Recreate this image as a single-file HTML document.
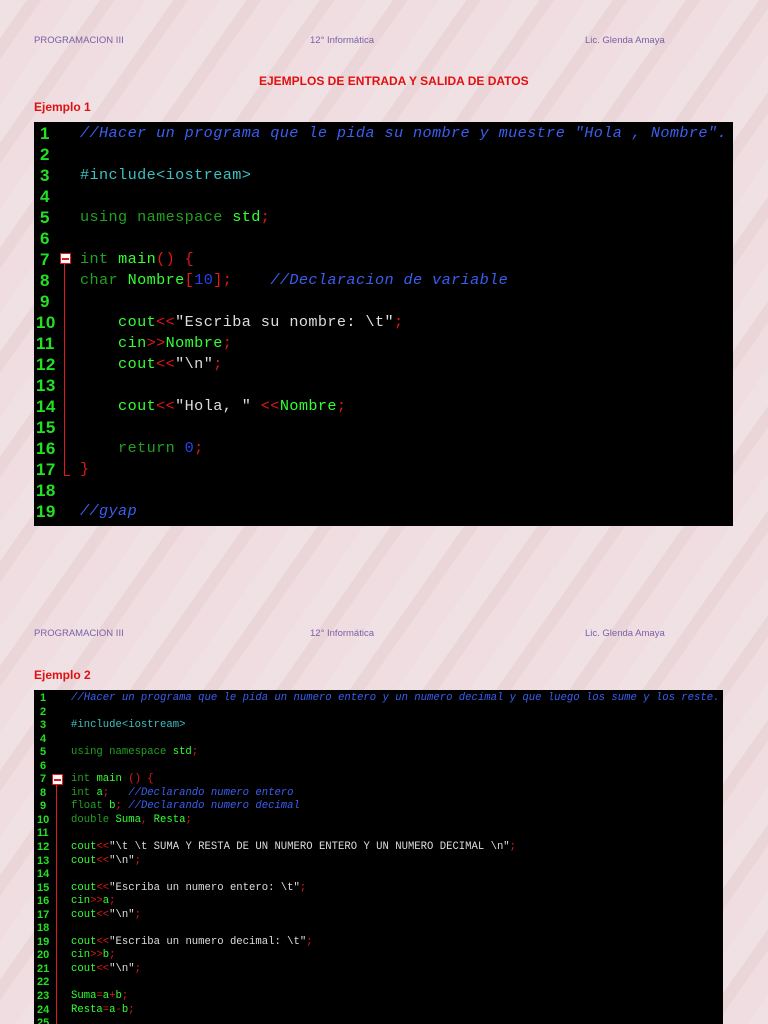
<!DOCTYPE html>
<html><head><meta charset="utf-8"><style>
*{margin:0;padding:0}
html,body{width:768px;height:1024px;overflow:hidden}
body{position:relative;font-family:"Liberation Sans",sans-serif;
background:#ecdade;
background-image:repeating-linear-gradient(125deg,rgba(255,255,255,0.18) 0 22px,rgba(205,160,160,0.08) 22px 34px,rgba(255,240,240,0.15) 34px 60px);}
.h{position:absolute;font-size:9.5px;color:#7a5fa8;}
.t{position:absolute;color:#e01010;font-weight:bold;font-size:12px;}
.code{position:absolute;background:#000;font-family:"Liberation Mono",monospace;overflow:hidden}
.ln{position:relative;white-space:pre}
.n{position:absolute;left:0;color:#22e022;font-weight:bold;font-family:"Liberation Sans",sans-serif}
.c{color:#3a5ff0;font-style:italic}.i{color:#3cc0c0}.k{color:#22a022}.g{color:#33ff33}.r{color:#e01818}.s{color:#ddd}.b{color:#2244ee}
.fold{position:absolute;border:1px solid #e01818;background:#fff}
.fold:after{content:"";position:absolute;left:1px;right:1px;top:50%;height:2px;margin-top:-1px;background:#e01818}
.vl{position:absolute;background:#e01818;width:1px}
</style></head><body>
<div class="h" style="left:34px;top:35px">PROGRAMACION III</div>
<div class="h" style="left:310px;top:35px">12° Informática</div>
<div class="h" style="left:585px;top:35px">Lic. Glenda Amaya</div>
<div class="t" style="left:259px;top:74px">EJEMPLOS DE ENTRADA Y SALIDA DE DATOS</div>
<div class="t" style="left:34px;top:100px">Ejemplo 1</div>

<div class="code" style="left:34px;top:122px;width:699px;height:404px;font-size:15.2px;line-height:21px;padding-top:1px;box-sizing:border-box;letter-spacing:0.4px"><div class="fold" style="left:26px;top:131px;width:9px;height:9px"></div><div class="vl" style="left:30px;top:142px;height:212px"></div><div class="vl" style="left:30px;top:353px;height:1px;width:6px"></div>
<div class="ln"><span class="n" style="left:6px;font-size:17px">1</span><span style="margin-left:46px" class="c">//Hacer un programa que le pida su nombre y muestre "Hola , Nombre".</span></div>
<div class="ln"><span class="n" style="left:6px;font-size:17px">2</span> </div>
<div class="ln"><span class="n" style="left:6px;font-size:17px">3</span><span style="margin-left:46px" class="i">#include&lt;iostream&gt;</span></div>
<div class="ln"><span class="n" style="left:6px;font-size:17px">4</span> </div>
<div class="ln"><span class="n" style="left:6px;font-size:17px">5</span><span style="margin-left:46px" class="k">using namespace </span><span class="g">std</span><span class="r">;</span></div>
<div class="ln"><span class="n" style="left:6px;font-size:17px">6</span> </div>
<div class="ln"><span class="n" style="left:6px;font-size:17px">7</span><span style="margin-left:46px" class="k">int </span><span class="g">main</span><span class="r">() {</span></div>
<div class="ln"><span class="n" style="left:6px;font-size:17px">8</span><span style="margin-left:46px" class="k">char </span><span class="g">Nombre</span><span class="r">[</span><span class="b">10</span><span class="r">];</span>    <span class="c">//Declaracion de variable</span></div>
<div class="ln"><span class="n" style="left:6px;font-size:17px">9</span> </div>
<div class="ln"><span class="n" style="left:2px;font-size:17px">10</span><span style="margin-left:46px" class="g">    cout</span><span class="r">&lt;&lt;</span><span class="s">"Escriba su nombre: \t"</span><span class="r">;</span></div>
<div class="ln"><span class="n" style="left:2px;font-size:17px">11</span><span style="margin-left:46px" class="g">    cin</span><span class="r">&gt;&gt;</span><span class="g">Nombre</span><span class="r">;</span></div>
<div class="ln"><span class="n" style="left:2px;font-size:17px">12</span><span style="margin-left:46px" class="g">    cout</span><span class="r">&lt;&lt;</span><span class="s">"\n"</span><span class="r">;</span></div>
<div class="ln"><span class="n" style="left:2px;font-size:17px">13</span> </div>
<div class="ln"><span class="n" style="left:2px;font-size:17px">14</span><span style="margin-left:46px" class="g">    cout</span><span class="r">&lt;&lt;</span><span class="s">"Hola, " </span><span class="r">&lt;&lt;</span><span class="g">Nombre</span><span class="r">;</span></div>
<div class="ln"><span class="n" style="left:2px;font-size:17px">15</span> </div>
<div class="ln"><span class="n" style="left:2px;font-size:17px">16</span><span style="margin-left:46px" class="k">    return </span><span class="b">0</span><span class="r">;</span></div>
<div class="ln"><span class="n" style="left:2px;font-size:17px">17</span><span style="margin-left:46px" class="r">}</span></div>
<div class="ln"><span class="n" style="left:2px;font-size:17px">18</span> </div>
<div class="ln"><span class="n" style="left:2px;font-size:17px">19</span><span style="margin-left:46px" class="c">//gyap</span></div>
</div>

<div class="h" style="left:34px;top:628px">PROGRAMACION III</div>
<div class="h" style="left:310px;top:628px">12° Informática</div>
<div class="h" style="left:585px;top:628px">Lic. Glenda Amaya</div>
<div class="t" style="left:34px;top:668px">Ejemplo 2</div>

<div class="code" style="left:34px;top:690px;width:689px;height:334px;font-size:10.6px;line-height:13.55px;padding-top:2px;box-sizing:border-box"><div class="fold" style="left:18px;top:84px;width:9px;height:9px"></div><div class="vl" style="left:22px;top:94px;height:240px"></div>
<div class="ln"><span class="n" style="left:6px;font-size:11px">1</span><span style="margin-left:37px" class="c">//Hacer un programa que le pida un numero entero y un numero decimal y que luego los sume y los reste.</span></div>
<div class="ln"><span class="n" style="left:6px;font-size:11px">2</span> </div>
<div class="ln"><span class="n" style="left:6px;font-size:11px">3</span><span style="margin-left:37px" class="i">#include&lt;iostream&gt;</span></div>
<div class="ln"><span class="n" style="left:6px;font-size:11px">4</span> </div>
<div class="ln"><span class="n" style="left:6px;font-size:11px">5</span><span style="margin-left:37px" class="k">using namespace </span><span class="g">std</span><span class="r">;</span></div>
<div class="ln"><span class="n" style="left:6px;font-size:11px">6</span> </div>
<div class="ln"><span class="n" style="left:6px;font-size:11px">7</span><span style="margin-left:37px" class="k">int </span><span class="g">main </span><span class="r">() {</span></div>
<div class="ln"><span class="n" style="left:6px;font-size:11px">8</span><span style="margin-left:37px" class="k">int </span><span class="g">a</span><span class="r">;</span>   <span class="c">//Declarando numero entero</span></div>
<div class="ln"><span class="n" style="left:6px;font-size:11px">9</span><span style="margin-left:37px" class="k">float </span><span class="g">b</span><span class="r">;</span> <span class="c">//Declarando numero decimal</span></div>
<div class="ln"><span class="n" style="left:3px;font-size:11px">10</span><span style="margin-left:37px" class="k">double </span><span class="g">Suma</span><span class="r">, </span><span class="g">Resta</span><span class="r">;</span></div>
<div class="ln"><span class="n" style="left:3px;font-size:11px">11</span> </div>
<div class="ln"><span class="n" style="left:3px;font-size:11px">12</span><span style="margin-left:37px" class="g">cout</span><span class="r">&lt;&lt;</span><span class="s">"\t \t SUMA Y RESTA DE UN NUMERO ENTERO Y UN NUMERO DECIMAL \n"</span><span class="r">;</span></div>
<div class="ln"><span class="n" style="left:3px;font-size:11px">13</span><span style="margin-left:37px" class="g">cout</span><span class="r">&lt;&lt;</span><span class="s">"\n"</span><span class="r">;</span></div>
<div class="ln"><span class="n" style="left:3px;font-size:11px">14</span> </div>
<div class="ln"><span class="n" style="left:3px;font-size:11px">15</span><span style="margin-left:37px" class="g">cout</span><span class="r">&lt;&lt;</span><span class="s">"Escriba un numero entero: \t"</span><span class="r">;</span></div>
<div class="ln"><span class="n" style="left:3px;font-size:11px">16</span><span style="margin-left:37px" class="g">cin</span><span class="r">&gt;&gt;</span><span class="g">a</span><span class="r">;</span></div>
<div class="ln"><span class="n" style="left:3px;font-size:11px">17</span><span style="margin-left:37px" class="g">cout</span><span class="r">&lt;&lt;</span><span class="s">"\n"</span><span class="r">;</span></div>
<div class="ln"><span class="n" style="left:3px;font-size:11px">18</span> </div>
<div class="ln"><span class="n" style="left:3px;font-size:11px">19</span><span style="margin-left:37px" class="g">cout</span><span class="r">&lt;&lt;</span><span class="s">"Escriba un numero decimal: \t"</span><span class="r">;</span></div>
<div class="ln"><span class="n" style="left:3px;font-size:11px">20</span><span style="margin-left:37px" class="g">cin</span><span class="r">&gt;&gt;</span><span class="g">b</span><span class="r">;</span></div>
<div class="ln"><span class="n" style="left:3px;font-size:11px">21</span><span style="margin-left:37px" class="g">cout</span><span class="r">&lt;&lt;</span><span class="s">"\n"</span><span class="r">;</span></div>
<div class="ln"><span class="n" style="left:3px;font-size:11px">22</span> </div>
<div class="ln"><span class="n" style="left:3px;font-size:11px">23</span><span style="margin-left:37px" class="g">Suma</span><span class="r">=</span><span class="g">a</span><span class="r">+</span><span class="g">b</span><span class="r">;</span></div>
<div class="ln"><span class="n" style="left:3px;font-size:11px">24</span><span style="margin-left:37px" class="g">Resta</span><span class="r">=</span><span class="g">a</span><span class="r">-</span><span class="g">b</span><span class="r">;</span></div>
<div class="ln"><span class="n" style="left:3px;font-size:11px">25</span> </div>
</div>
</body></html>
